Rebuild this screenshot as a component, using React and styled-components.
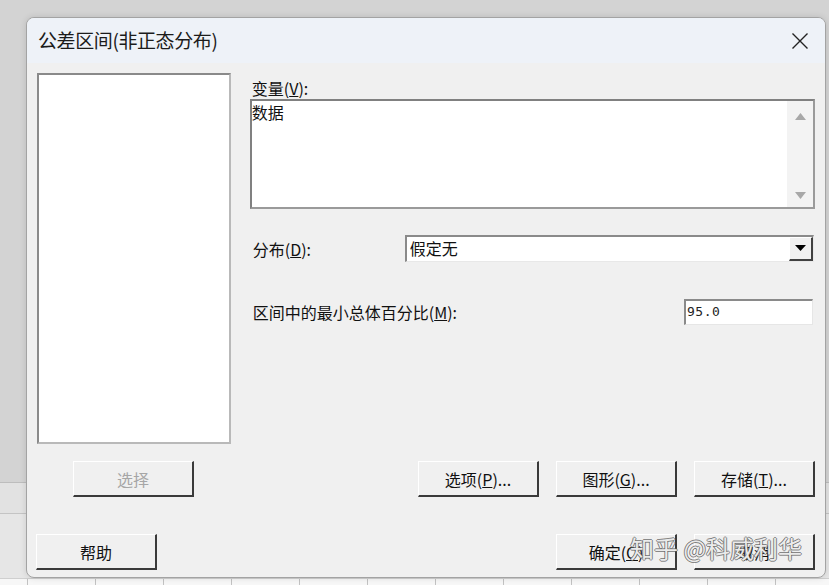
import React from "react";
import styled, { createGlobalStyle } from "styled-components";

const Global = createGlobalStyle`
  html, body { margin: 0; padding: 0; }
  body { font-family: "Noto Sans CJK SC", "Noto Sans", sans-serif; }
`;

const Page = styled.div`
  width: 829px;
  height: 585px;
  overflow: hidden;
  display: flex;
  flex-direction: column;
  background:
    linear-gradient(to bottom, #d3d3d3 0 482px, #bdbdbd 482px 483px, #e2e2e2 483px 513px, #c4c4c4 513px 514px, #e6e6e6 514px 100%);
`;

const Desk = styled.div`
  padding: 17px 0 0 26px;
  display: flex;
`;

const Dialog = styled.div`
  position: relative;
  width: 800px;
  height: 561px;
  box-sizing: border-box;
  border: 1px solid #a3a3a3;
  border-radius: 8px;
  background: #f0f0f0;
  overflow: hidden;
  display: flex;
  flex-direction: column;
  box-shadow: 0 0 6px rgba(0, 0, 0, 0.12);
`;

const TitleBar = styled.div`
  height: 45px;
  flex: none;
  background: #eef2f8;
  display: flex;
  align-items: center;
  justify-content: space-between;
  padding: 0 16px 0 11px;
`;

const Title = styled.div`
  font-size: 19px;
  color: #1b1b1b;
  letter-spacing: -0.4px;
  padding-bottom: 2px;
`;

const CloseIcon = styled.svg`
  width: 18px;
  height: 18px;
  display: block;
`;

const Body = styled.div`
  flex: 1;
  padding: 10px 10px 0 10px;
  display: flex;
  flex-direction: column;
`;

const TopSection = styled.div`
  display: flex;
  gap: 19px;
`;

const ListBox = styled.div`
  width: 194px;
  height: 371px;
  box-sizing: border-box;
  background: #fff;
  border-top: 2px solid #8a8a8a;
  border-left: 2px solid #8a8a8a;
  border-right: 2px solid #b9b9b9;
  border-bottom: 2px solid #b9b9b9;
`;

const RightCol = styled.div`
  width: 566px;
  display: flex;
  flex-direction: column;
`;

const Label = styled.div`
  font-size: 16px;
  line-height: 20px;
  color: #111;
  white-space: nowrap;
`;

const VarLabel = styled(Label)`
  height: 26px;
  display: flex;
  align-items: flex-end;
  padding-left: 2px;
  padding-bottom: 1px;
  box-sizing: border-box;
`;

const VarBox = styled.div`
  height: 110px;
  box-sizing: border-box;
  background: #fff;
  border-top: 2px solid #808080;
  border-left: 2px solid #808080;
  border-right: 2px solid #9a9a9a;
  border-bottom: 2px solid #9a9a9a;
  display: flex;
`;

const VarText = styled.div`
  flex: 1;
  font-size: 16px;
  line-height: 20px;
  padding: 1px 0 0 0;
  color: #111;
`;

const ScrollBar = styled.div`
  width: 26px;
  background: #f3f3f3;
  display: flex;
  flex-direction: column;
  justify-content: space-between;
  align-items: center;
  padding: 12px 0 8px;
`;

const Arrow = styled.svg`
  width: 11px;
  height: 7px;
  display: block;
`;

const FieldRow = styled.div`
  display: flex;
  align-items: center;
  margin-top: ${(p) => p.$top}px;
  height: ${(p) => p.$h}px;
  padding-left: 3px;
`;

const SelectLabel = styled(Label)`
  width: 152px;
`;

const Select = styled.div`
  width: 409px;
  height: 27px;
  box-sizing: border-box;
  background: #fff;
  border-top: 2px solid #8a8a8a;
  border-left: 2px solid #8a8a8a;
  border-right: 1px solid #e8e8e8;
  border-bottom: 1px solid #e8e8e8;
  display: flex;
  align-items: stretch;
`;

const SelectText = styled.div`
  flex: 1;
  font-size: 16px;
  line-height: 22px;
  padding-left: 3px;
  color: #111;
`;

const DropBtn = styled.div`
  width: 24px;
  background: #f0f0f0;
  border-right: 2px solid #404040;
  border-bottom: 2px solid #404040;
  border-top: 1px solid #fff;
  border-left: 1px solid #fff;
  box-sizing: border-box;
  display: flex;
  align-items: center;
  justify-content: center;
`;

const NumInput = styled.div`
  margin-left: auto;
  margin-right: 2px;
  width: 129px;
  height: 26px;
  box-sizing: border-box;
  background: #fff;
  border-top: 2px solid #8a8a8a;
  border-left: 2px solid #8a8a8a;
  border-right: 1px solid #e6e6e6;
  border-bottom: 1px solid #e6e6e6;
  font-family: "DejaVu Sans Mono", "Liberation Mono", monospace;
  font-size: 13px;
  line-height: 21px;
  padding-left: 1px;
  color: #222;
  letter-spacing: 0.5px;
`;

const ButtonRow = styled.div`
  display: flex;
  gap: 17px;
  margin-top: ${(p) => p.$top}px;
`;

const Button = styled.div`
  width: 121px;
  height: 36px;
  box-sizing: border-box;
  background: #f0f0f0;
  border-top: 1px solid #ffffff;
  border-left: 1px solid #ffffff;
  border-right: 2px solid #3a3a3a;
  border-bottom: 2px solid #3a3a3a;
  display: flex;
  align-items: center;
  justify-content: center;
  font-size: 16px;
  color: ${(p) => (p.$disabled ? "#a6a6a6" : "#111")};
  margin-left: ${(p) => p.$ml || 0}px;
  white-space: nowrap;
`;

const Spacer = styled.div`
  flex: 1;
`;

const Watermark = styled.div`
  position: absolute;
  left: 603px;
  top: 515px;
  font-size: 24px;
  line-height: 30px;
  color: rgba(255, 255, 255, 0.9);
  white-space: nowrap;
  text-shadow:
    1px 0 0 rgba(90, 90, 90, 0.7),
    -1px 0 0 rgba(90, 90, 90, 0.7),
    0 1px 0 rgba(90, 90, 90, 0.7),
    0 -1px 0 rgba(90, 90, 90, 0.7);
`;

const GridStrip = styled.div`
  flex: 1;
  background:
    repeating-linear-gradient(90deg, #c2c2c2 0 1px, transparent 1px 68px) 27px 0 / 100% 100% no-repeat,
    #f7f7f7;
  border-top: 1px solid #cfcfcf;
`;

export default function App() {
  return (
    <Page>
      <Global />
      <Desk>
        <Dialog>
          <TitleBar>
            <Title>公差区间(非正态分布)</Title>
            <CloseIcon viewBox="0 0 18 18">
              <path d="M1.5 1.5 L16.5 16.5 M16.5 1.5 L1.5 16.5" stroke="#222" strokeWidth="1.4" fill="none" />
            </CloseIcon>
          </TitleBar>
          <Body>
            <TopSection>
              <ListBox />
              <RightCol>
                <VarLabel>
                  变量(<u>V</u>):
                </VarLabel>
                <VarBox>
                  <VarText>数据</VarText>
                  <ScrollBar>
                    <Arrow viewBox="0 0 11 7">
                      <path d="M5.5 0 L11 7 L0 7 Z" fill="#a8a8a8" />
                    </Arrow>
                    <Arrow viewBox="0 0 11 7">
                      <path d="M0 0 L11 0 L5.5 7 Z" fill="#a8a8a8" />
                    </Arrow>
                  </ScrollBar>
                </VarBox>
                <FieldRow $top={26} $h={27}>
                  <SelectLabel>
                    分布(<u>D</u>):
                  </SelectLabel>
                  <Select>
                    <SelectText>假定无</SelectText>
                    <DropBtn>
                      <Arrow viewBox="0 0 11 7">
                        <path d="M0 0 L11 0 L5.5 6 Z" fill="#000" />
                      </Arrow>
                    </DropBtn>
                  </Select>
                </FieldRow>
                <FieldRow $top={37} $h={26}>
                  <Label>
                    区间中的最小总体百分比(<u>M</u>):
                  </Label>
                  <NumInput>95.0</NumInput>
                </FieldRow>
              </RightCol>
            </TopSection>
            <ButtonRow $top={17}>
              <Button $disabled $ml={36}>选择</Button>
              <Spacer />
              <Button>
                选项(<u>P</u>)...
              </Button>
              <Button>
                图形(<u>G</u>)...
              </Button>
              <Button>
                存储(<u>T</u>)...
              </Button>
            </ButtonRow>
            <ButtonRow $top={37}>
              <Button $ml={-1}>帮助</Button>
              <Spacer />
              <Button>
                确定(<u>O</u>)
              </Button>
              <Button>取消</Button>
            </ButtonRow>
          </Body>
          <Watermark>知乎 @科威利华</Watermark>
        </Dialog>
      </Desk>
      <GridStrip />
    </Page>
  );
}
